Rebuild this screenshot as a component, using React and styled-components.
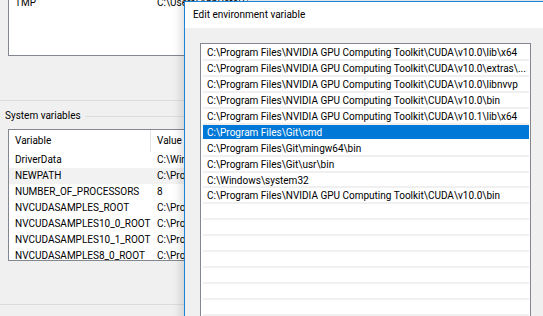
import React from 'react';
import styled, { createGlobalStyle } from 'styled-components';

const Global = createGlobalStyle`
  html, body {
    margin: 0;
    padding: 0;
    overflow: hidden;
    background: #f0f0f0;
  }
  body {
    font-family: Roboto, "Liberation Sans", sans-serif;
    font-size: 10px;
    color: #000;
  }
`;

const Screen = styled.div`
  position: relative;
  width: 543px;
  height: 316px;
  overflow: hidden;
  background: #f0f0f0;
`;

const BackWindow = styled.div`
  display: flex;
  flex-direction: column;
  height: 100%;
`;

const ListBox = styled.div`
  margin-left: 8px;
  margin-top: ${(p) => p.$mt || 0}px;
  width: 240px;
  height: ${(p) => p.$h}px;
  background: #fff;
  border: 1px solid #828790;
  border-top: ${(p) => (p.$noTop ? 'none' : '1px solid #828790')};
  overflow: hidden;
  box-sizing: border-box;
`;

const VarRow = styled.div`
  display: grid;
  grid-template-columns: 136px 1fr;
  height: 16px;
  line-height: 16px;
  padding-left: 6px;
  white-space: nowrap;
  background: ${(p) => (p.$hover ? '#f2f2f2' : 'transparent')};
  & span + span {
    padding-left: 6px;
  }
`;

const ClippedRow = styled(VarRow)`
  margin-top: -5px;
`;

const HeaderRow = styled(VarRow)`
  height: 22px;
  line-height: 22px;
  & span:first-child {
    border-right: 1px solid #e5e5e5;
  }
`;

const Divider = styled.div`
  height: 1px;
  background: #dcdcdc;
  margin-top: ${(p) => p.$mt}px;
`;

const GroupLabel = styled.div`
  display: flex;
  align-items: center;
  gap: 4px;
  margin-top: 7px;
  padding-left: 5px;
  height: 16px;
  line-height: 16px;
  &::after {
    content: '';
    flex: 1;
    height: 1px;
    background: #dcdcdc;
  }
`;

const Dialog = styled.div`
  position: absolute;
  left: 184px;
  top: 1px;
  width: 380px;
  height: 330px;
  border: 1px solid #1883d7;
  background: #f0f0f0;
  box-shadow: -4px 0 8px rgba(0, 0, 0, 0.12);
  display: flex;
  flex-direction: column;
`;

const TitleBar = styled.div`
  height: 26px;
  line-height: 26px;
  padding-left: 8px;
  background: #fff;
`;

const DialogBody = styled.div`
  padding: 15px 0 0 15px;
`;

const PathList = styled.div`
  width: 331px;
  height: 290px;
  box-sizing: border-box;
  background: #fff;
  border: 1px solid #828790;
  padding: 1px 1px 0 2px;
  display: flex;
  flex-direction: column;
`;

const PathRow = styled.div`
  height: 14px;
  line-height: 15px;
  padding-left: 4px;
  border-bottom: 2px solid ${(p) => (p.$selected ? '#fff' : '#f0f0f0')};
  background: ${(p) => (p.$selected ? '#0078d7' : '#fff')};
  color: ${(p) => (p.$selected ? '#fff' : '#000')};
  white-space: nowrap;
  overflow: hidden;
`;

const sysVars = [
  ['DriverData', 'C:\\Windows'],
  ['NEWPATH', 'C:\\Program Files'],
  ['NUMBER_OF_PROCESSORS', '8'],
  ['NVCUDASAMPLES_ROOT', 'C:\\ProgramData'],
  ['NVCUDASAMPLES10_0_ROOT', 'C:\\ProgramData'],
  ['NVCUDASAMPLES10_1_ROOT', 'C:\\ProgramData'],
  ['NVCUDASAMPLES8_0_ROOT', 'C:\\ProgramData'],
];

const paths = [
  'C:\\Program Files\\NVIDIA GPU Computing Toolkit\\CUDA\\v10.0\\lib\\x64',
  'C:\\Program Files\\NVIDIA GPU Computing Toolkit\\CUDA\\v10.0\\extras\\...',
  'C:\\Program Files\\NVIDIA GPU Computing Toolkit\\CUDA\\v10.0\\libnvvp',
  'C:\\Program Files\\NVIDIA GPU Computing Toolkit\\CUDA\\v10.0\\bin',
  'C:\\Program Files\\NVIDIA GPU Computing Toolkit\\CUDA\\v10.1\\lib\\x64',
  'C:\\Program Files\\Git\\cmd',
  'C:\\Program Files\\Git\\mingw64\\bin',
  'C:\\Program Files\\Git\\usr\\bin',
  'C:\\Windows\\system32',
  'C:\\Program Files\\NVIDIA GPU Computing Toolkit\\CUDA\\v10.0\\bin',
  '', '', '', '', '', '', '', '',
];

const App = () => {
  return (
    <Screen>
      <Global />
      <BackWindow>
        <ListBox $h={56} $noTop>
          <ClippedRow>
            <span>TMP</span>
            <span>C:\Users\AppData\Local\Temp</span>
          </ClippedRow>
        </ListBox>
        <Divider $mt={44} />
        <GroupLabel>System variables</GroupLabel>
        <ListBox $h={132} $mt={5}>
          <HeaderRow>
            <span>Variable</span>
            <span>Value</span>
          </HeaderRow>
          {sysVars.map(([name, value]) => (
            <VarRow key={name} $hover={name === 'NEWPATH'}>
              <span>{name}</span>
              <span>{value}</span>
            </VarRow>
          ))}
        </ListBox>
        <Divider $mt={43} />
      </BackWindow>
      <Dialog>
        <TitleBar>Edit environment variable</TitleBar>
        <DialogBody>
          <PathList>
            {paths.map((p, i) => (
              <PathRow key={i} $selected={i === 5}>
                {p}
              </PathRow>
            ))}
          </PathList>
        </DialogBody>
      </Dialog>
    </Screen>
  );
};

export default App;
